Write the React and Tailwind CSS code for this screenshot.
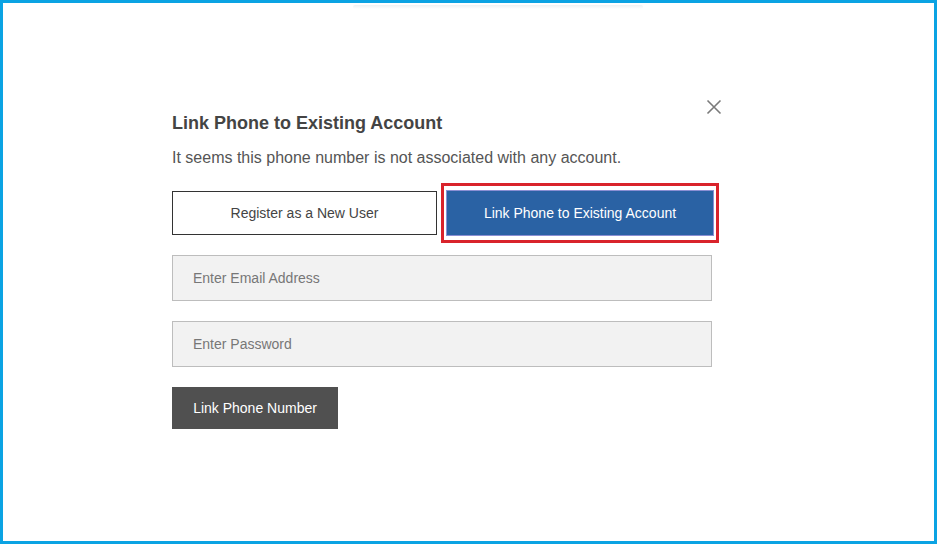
import React from "react";

export default function App() {
  return (
    <div
      className="relative w-[937px] h-[544px] box-border border-[3px] border-[#0ba3e3] bg-white pl-[169px] pt-[109px]"
      style={{ fontFamily: '"Liberation Sans", Arial, sans-serif' }}
    >
      <div className="absolute left-[350px] top-[2px] w-[290px] h-[4px] bg-gradient-to-b from-[#e9eef0] to-white rounded-full opacity-80" />
      <button className="absolute left-[701px] top-[94px] w-[20px] h-[20px] flex items-center justify-center text-[#7a7a7a]">
        <svg width="16" height="16" viewBox="0 0 16 16" fill="none" stroke="currentColor" strokeWidth="1.6">
          <path d="M1.5 1.5 L14.5 14.5 M14.5 1.5 L1.5 14.5" />
        </svg>
      </button>
      <h2 className="text-[18px] leading-[22px] font-bold text-[#444444]">Link Phone to Existing Account</h2>
      <p className="mt-[14px] text-[16px] leading-[20px] text-[#555555]">
        It seems this phone number is not associated with any account.
      </p>
      <div className="mt-[15px] flex items-center gap-[4px]">
        <button className="w-[265px] h-[44px] box-border border border-[#333333] bg-white text-[14px] text-[#444444]">
          Register as a New User
        </button>
        <div className="w-[278px] h-[60px] box-border border-[3px] border-[#d9232b] px-[2px] py-[4px]">
          <button className="w-[268px] h-[46px] box-border border border-[#8a8fd4] bg-[#2a62a4] text-[14px] text-white">
            Link Phone to Existing Account
          </button>
        </div>
      </div>
      <div className="mt-[12px] flex flex-col gap-[20px] w-[540px]">
        <input
          className="h-[46px] box-border border border-[#bdbdbd] bg-[#f2f2f2] pl-[20px] text-[14px] text-[#444] placeholder:text-[#777777] outline-none"
          placeholder="Enter Email Address"
        />
        <input
          type="password"
          className="h-[46px] box-border border border-[#bdbdbd] bg-[#f2f2f2] pl-[20px] text-[14px] text-[#444] placeholder:text-[#777777] outline-none"
          placeholder="Enter Password"
        />
      </div>
      <button className="mt-[20px] w-[166px] h-[42px] bg-[#505050] text-[14px] text-white">
        Link Phone Number
      </button>
    </div>
  );
}
